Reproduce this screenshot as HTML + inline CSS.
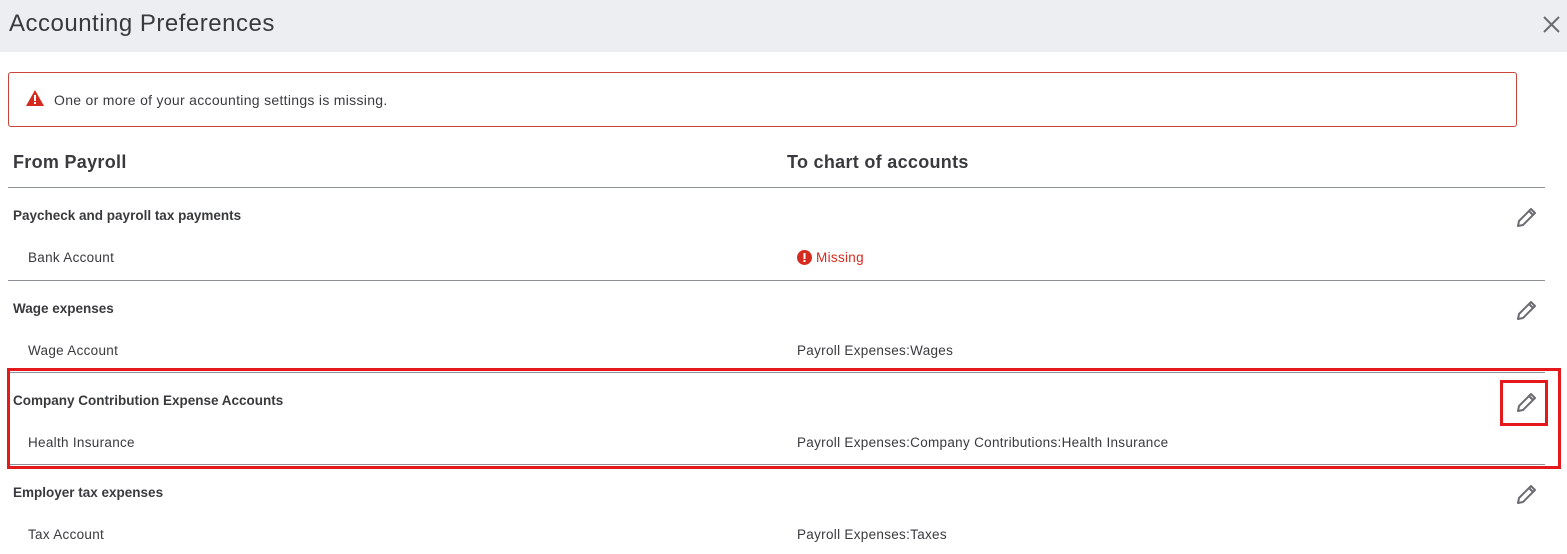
<!DOCTYPE html>
<html><head><style>
body{margin:0;width:1567px;height:554px;overflow:hidden;background:#fff;font-family:"Liberation Sans",sans-serif;color:#393a3d;position:relative}
.hdr{position:absolute;left:0;top:0;width:1567px;height:52px;background:#eceef1}
.hdr h1{position:absolute;left:9px;top:10px;margin:0;font-size:24px;letter-spacing:0.5px;font-weight:normal;color:#393a3d}
.x{position:absolute;left:1543px;top:16px}
.alert{position:absolute;left:8px;top:72px;width:1507px;height:53px;border:1px solid #c9453a;border-radius:3px}
.alert span{position:absolute;left:45px;top:19px;font-size:14px;letter-spacing:0.3px}
.t{position:absolute;white-space:nowrap}
.h2{font-size:18px;font-weight:bold;top:152px;letter-spacing:0.3px}
.b{font-size:13.5px;font-weight:bold;left:13px;margin-top:1px}
.r{font-size:13.5px;letter-spacing:0.3px;margin-top:1px}
.line{position:absolute;left:8px;width:1537px;height:1px;background:#8d9096}
.pen{position:absolute;left:1516px}
.red{position:absolute;border:3px solid #e4191b}
</style></head><body>
<div class="hdr"><h1>Accounting Preferences</h1>
<svg class="x" width="17" height="17" viewBox="0 0 17 17"><path d="M1 1L16 16M16 1L1 16" stroke="#6b6c72" stroke-width="2"/></svg></div>
<div class="alert"><svg style="position:absolute;left:17px;top:17px" width="18" height="16" viewBox="0 0 18 16"><path d="M9 0L18 16H0Z" fill="#d52b1e"/><rect x="8" y="5" width="2" height="6" fill="#fff"/><rect x="8" y="12" width="2" height="2" fill="#fff"/></svg><span>One or more of your accounting settings is missing.</span></div>
<div class="t h2" style="left:13px">From Payroll</div>
<div class="t h2" style="left:787px">To chart of accounts</div>
<div class="line" style="top:187px"></div>
<div class="t b" style="top:207px">Paycheck and payroll tax payments</div>
<div class="t r" style="left:28px;top:249px">Bank Account</div>
<div class="t r" style="left:797px;top:249px;color:#d52b1e"><svg width="15" height="15" viewBox="0 0 15 15" style="vertical-align:-3px"><circle cx="7.5" cy="7.5" r="7.5" fill="#d52b1e"/><rect x="6.5" y="3" width="2" height="6" fill="#fff"/><rect x="6.5" y="10" width="2" height="2" fill="#fff"/></svg> Missing</div>
<div class="line" style="top:280px"></div>
<div class="t b" style="top:300px">Wage expenses</div>
<div class="t r" style="left:28px;top:342px">Wage Account</div>
<div class="t r" style="left:797px;top:342px">Payroll Expenses:Wages</div>
<div class="line" style="top:372px"></div>
<div class="t b" style="top:392px">Company Contribution Expense Accounts</div>
<div class="t r" style="left:28px;top:434px">Health Insurance</div>
<div class="t r" style="left:797px;top:434px">Payroll Expenses:Company Contributions:Health Insurance</div>
<div class="line" style="top:464px"></div>
<div class="t b" style="top:484px">Employer tax expenses</div>
<div class="t r" style="left:28px;top:526px">Tax Account</div>
<div class="t r" style="left:797px;top:526px">Payroll Expenses:Taxes</div>
<svg class="pen" style="top:207px" width="21" height="21" viewBox="0 0 21 21"><g fill="none" stroke="#6b6c72" stroke-width="2" stroke-linejoin="round"><path d="M2 19L3 14L15 2L19 6L7 18Z"/><path d="M13 4L17 8"/></g></svg>
<svg class="pen" style="top:300px" width="21" height="21" viewBox="0 0 21 21"><g fill="none" stroke="#6b6c72" stroke-width="2" stroke-linejoin="round"><path d="M2 19L3 14L15 2L19 6L7 18Z"/><path d="M13 4L17 8"/></g></svg>
<svg class="pen" style="top:392px" width="21" height="21" viewBox="0 0 21 21"><g fill="none" stroke="#6b6c72" stroke-width="2" stroke-linejoin="round"><path d="M2 19L3 14L15 2L19 6L7 18Z"/><path d="M13 4L17 8"/></g></svg>
<svg class="pen" style="top:484px" width="21" height="21" viewBox="0 0 21 21"><g fill="none" stroke="#6b6c72" stroke-width="2" stroke-linejoin="round"><path d="M2 19L3 14L15 2L19 6L7 18Z"/><path d="M13 4L17 8"/></g></svg>
<div class="red" style="left:7px;top:368px;width:1548px;height:95px"></div>
<div class="red" style="left:1500px;top:380px;width:42px;height:40px"></div>
</body></html>
